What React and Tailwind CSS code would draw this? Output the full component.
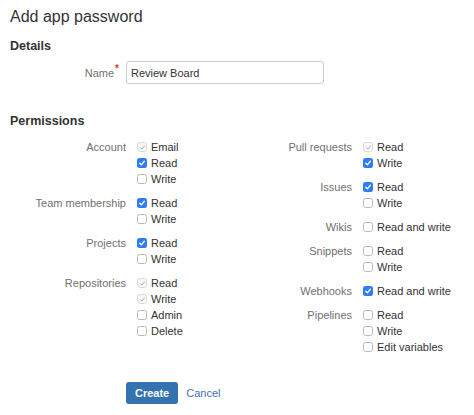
import React from 'react';

const left = [
  { label: 'Account', opts: [['Email', 'locked'], ['Read', 'on'], ['Write', 'off']] },
  { label: 'Team membership', opts: [['Read', 'on'], ['Write', 'off']] },
  { label: 'Projects', opts: [['Read', 'on'], ['Write', 'off']] },
  { label: 'Repositories', opts: [['Read', 'locked'], ['Write', 'locked'], ['Admin', 'off'], ['Delete', 'off']] },
];

const right = [
  { label: 'Pull requests', opts: [['Read', 'locked'], ['Write', 'on']] },
  { label: 'Issues', opts: [['Read', 'on'], ['Write', 'off']] },
  { label: 'Wikis', opts: [['Read and write', 'off']] },
  { label: 'Snippets', opts: [['Read', 'off'], ['Write', 'off']] },
  { label: 'Webhooks', opts: [['Read and write', 'on']] },
  { label: 'Pipelines', opts: [['Read', 'off'], ['Write', 'off'], ['Edit variables', 'off']] },
];

const Box = ({ state }) => {
  if (state === 'on')
    return (
      <span className="w-[10px] h-[10px] rounded-[2.5px] bg-[#2f7df6] flex items-center justify-center">
        <svg width="8" height="8" viewBox="0 0 10 10"><path d="M2.2 5.3 4.2 7.3 7.9 2.8" fill="none" stroke="#fff" strokeWidth="1.7" strokeLinecap="round" strokeLinejoin="round" /></svg>
      </span>
    );
  if (state === 'locked')
    return (
      <span className="w-[10px] h-[10px] rounded-[2.5px] bg-[#f7f7f7] border border-[#dcdcdc] flex items-center justify-center">
        <svg width="7" height="7" viewBox="0 0 10 10"><path d="M2.4 5.4 4.3 7.2 7.8 2.9" fill="none" stroke="#a8a8a8" strokeWidth="1.3" strokeLinecap="round" strokeLinejoin="round" /></svg>
      </span>
    );
  return <span className="w-[10px] h-[10px] rounded-[2.5px] bg-white border border-[#b9b9b9]" />;
};

const Group = ({ label, opts }) => (
  <div className="flex">
    <div className="w-[116px] text-right text-[#707070] leading-4">{label}</div>
    <div className="ml-[11px] flex flex-col">
      {opts.map(([t, s]) => (
        <label key={t} className="flex items-center h-4 text-[#333]">
          <Box state={s} />
          <span className="ml-[4px]">{t}</span>
        </label>
      ))}
    </div>
  </div>
);

export default function App() {
  return (
    <div className="bg-white w-[474px] h-[415px] px-[10px] pt-[7px] text-[11px] leading-4 text-[#333]" style={{ fontFamily: '"Liberation Sans", Arial, sans-serif' }}>
      <h1 className="text-[16px] leading-5 text-[#333]">Add app password</h1>
      <h2 className="mt-[11px] text-[12.5px] leading-4 font-bold">Details</h2>
      <div className="mt-[7px] flex items-center">
        <div className="w-[116px] text-right text-[#707070] pr-[7px]">
          Name<sup className="text-[#d04437] text-[10px] ml-[1px] font-bold">*</sup>
        </div>
        <input
          defaultValue="Review Board"
          className="w-[198px] h-[23px] border border-[#cccccc] rounded-[3px] px-[4px] text-[11px] text-[#333] outline-none"
        />
      </div>
      <h2 className="mt-[29px] text-[12.5px] leading-4 font-bold">Permissions</h2>
      <div className="mt-[10px] flex">
        <div className="w-[226px] flex flex-col gap-2">
          {left.map((g) => <Group key={g.label} {...g} />)}
        </div>
        <div className="w-[226px] flex flex-col gap-2">
          {right.map((g) => <Group key={g.label} {...g} />)}
        </div>
      </div>
      <div className="mt-[27px] ml-[116px] flex items-center">
        <button className="h-[22px] px-[9px] rounded-[3px] bg-[#3572b0] text-white font-bold text-[11px]">Create</button>
        <a className="ml-2 text-[#3b73af]">Cancel</a>
      </div>
    </div>
  );
}
